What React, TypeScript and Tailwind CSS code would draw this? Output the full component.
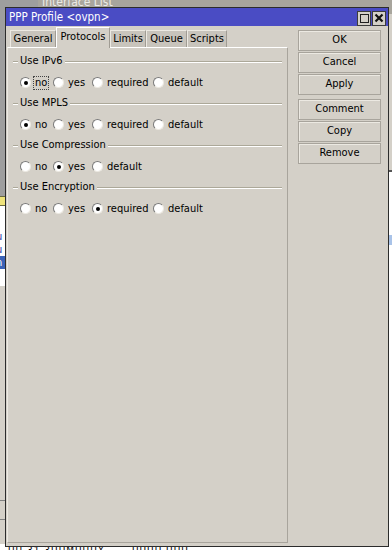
import React from "react";

const FONT = '"DejaVu Sans Condensed", "DejaVu Sans", sans-serif';

function Radio({ checked }: { checked?: boolean }) {
  return (
    <span className="relative inline-block w-[11px] h-[11px] rounded-full bg-white border-[1.5px] border-t-[#7a7a7a] border-l-[#7a7a7a] border-r-[#ece9e2] border-b-[#ece9e2] shrink-0">
      {checked && (
        <span className="absolute left-1/2 top-1/2 w-[4px] h-[4px] -ml-[2px] -mt-[2px] rounded-full bg-black" />
      )}
    </span>
  );
}

type Opt = { label: string; w: number; checked?: boolean; focus?: boolean };

function RadioRow({ opts }: { opts: Opt[] }) {
  return (
    <div className="h-[21px] flex items-center pl-[12px]">
      {opts.map((o, i) => (
        <div key={i} className="flex items-center" style={{ width: o.w }}>
          <Radio checked={o.checked} />
          <span
            className={
              "ml-[2px] px-[1px] leading-[11px] pb-[1px] border border-dotted " +
              (o.focus ? "border-[#444]" : "border-transparent")
            }
          >
            {o.label}
          </span>
        </div>
      ))}
    </div>
  );
}

function GroupLabel({ text }: { text: string }) {
  return (
    <div className="h-[21px] flex items-center">
      <div className="ml-[5px] w-[5px] h-[2px] border-t border-t-[#aca899] border-b border-b-white" />
      <span className="px-[2px]">{text}</span>
      <div className="flex-1 mr-[5px] h-[2px] border-t border-t-[#aca899] border-b border-b-white" />
    </div>
  );
}

function Btn({ label }: { label: string }) {
  return (
    <div className="h-[21px] flex items-center justify-center border border-[#a8a49c] bg-[#d4d0c8] shadow-[inset_1px_1px_0_#ece9e2]">
      {label}
    </div>
  );
}

function Tab({ label, w, active }: { label: string; w: number; active?: boolean }) {
  return (
    <div
      className={
        active
          ? "h-[21px] -mb-[1px] z-10 flex items-center justify-center bg-[#d4d0c8] border-t border-l border-t-white border-l-white border-r border-r-[#a09c94] pb-[1px]"
          : "h-[17px] flex items-center justify-center bg-[#c8c4bc] border-t border-l border-t-[#ece9e2] border-l-[#ece9e2] border-r border-r-[#a09c94]"
      }
      style={{ width: w }}
    >
      {label}
    </div>
  );
}

export default function App() {
  return (
    <div
      className="relative w-[392px] h-[550px] overflow-hidden bg-[#d4d0c8] text-[11px] text-black"
      style={{ fontFamily: FONT }}
    >
      {/* background desktop windows */}
      <div className="absolute left-0 top-0 w-[38px] h-[200px] bg-[#9e9e9e]" />
      <div className="absolute left-[38px] top-0 right-0 h-[20px] bg-[#a8a59d] text-[#ecebe6] text-[12px] pl-[4px] leading-[16px] -mt-[6px]">
        Interface List
      </div>
      <div className="absolute left-0 top-[196px] w-[10px] h-[10px] bg-[#efe37a] border-y border-[#6a6a40]" />
      <div className="absolute left-0 top-[206px] w-[10px] h-[80px] bg-white text-[#2a3aa8] leading-[13px]">
        <div className="pt-[24px] -ml-[4px]">u</div>
        <div className="-ml-[4px]">u</div>
        <div className="-ml-[4px] bg-[#3b63b8] text-white">n</div>
      </div>
      <div className="absolute left-0 top-[500px] w-[10px] h-[20px] border-y border-[#808080]" />
      <div className="absolute right-0 top-[170px] w-[6px] h-[380px] bg-white border-t-2 border-[#555]" />
      <div className="absolute right-0 top-[235px] w-[6px] h-[10px] bg-[#a9c3e8]" />
      <div className="absolute left-0 right-0 top-[544px] h-[6px] bg-white text-[10px] leading-[10px] pt-[2px] pl-[8px] tracking-[1px]">
        UU 31 3UUMUUUX&nbsp;&nbsp;&nbsp;&nbsp;&nbsp;&nbsp;&nbsp;UUUU UUU
      </div>

      {/* dialog */}
      <div className="absolute left-[5px] top-[7px] w-[384px] h-[540px] border border-[#2c2c2c] bg-[#d4d0c8] flex flex-col">
        <div className="h-[18px] bg-[#4a4cc4] text-white text-[11.5px] flex items-center justify-between pl-[3px] pr-[2px]">
          <span className="leading-[14px]">PPP Profile &lt;ovpn&gt;</span>
          <div className="flex gap-[1px] mt-[2px]">
            <div className="w-[14px] h-[15px] bg-[#d4d0c8] border border-[#3c3c3c] flex items-center justify-center">
              <div className="w-[9px] h-[9px] border-[1.5px] border-[#202020]" />
            </div>
            <div className="w-[14px] h-[15px] bg-[#d4d0c8] border border-[#3c3c3c] flex items-center justify-center">
              <svg width="10" height="10" viewBox="0 0 10 10">
                <path d="M1.5 1.5 L8.5 8.5 M8.5 1.5 L1.5 8.5" stroke="#111" strokeWidth="2.2" />
              </svg>
            </div>
          </div>
        </div>

        <div className="flex flex-1 pt-[1px]">
          {/* left: tabs + panel */}
          <div className="ml-[1px] w-[281px] flex flex-col pb-[3px]">
            <div className="h-[20px] flex items-end pl-[3px]">
              <Tab label="General" w={46} />
              <Tab label="Protocols" w={54} active />
              <Tab label="Limits" w={36} />
              <Tab label="Queue" w={41} />
              <Tab label="Scripts" w={40} />
            </div>
            <div className="flex-1 border border-t-white border-l-[#ece9e2] border-r-[#a8a49c] border-b-[#a8a49c] pt-[3px]">
              <GroupLabel text="Use IPv6" />
              <RadioRow
                opts={[
                  { label: "no", w: 33, checked: true, focus: true },
                  { label: "yes", w: 39 },
                  { label: "required", w: 61 },
                  { label: "default", w: 60 },
                ]}
              />
              <GroupLabel text="Use MPLS" />
              <RadioRow
                opts={[
                  { label: "no", w: 33, checked: true },
                  { label: "yes", w: 39 },
                  { label: "required", w: 61 },
                  { label: "default", w: 60 },
                ]}
              />
              <GroupLabel text="Use Compression" />
              <RadioRow
                opts={[
                  { label: "no", w: 33 },
                  { label: "yes", w: 39, checked: true },
                  { label: "default", w: 60 },
                ]}
              />
              <GroupLabel text="Use Encryption" />
              <RadioRow
                opts={[
                  { label: "no", w: 33 },
                  { label: "yes", w: 39 },
                  { label: "required", w: 61, checked: true },
                  { label: "default", w: 60 },
                ]}
              />
            </div>
          </div>

          {/* right: buttons */}
          <div className="ml-[10px] w-[83px] mt-[3px] flex flex-col">
            <div className="flex flex-col gap-[1px]">
              <Btn label="OK" />
              <Btn label="Cancel" />
              <Btn label="Apply" />
            </div>
            <div className="flex flex-col gap-[1px] mt-[4px]">
              <Btn label="Comment" />
              <Btn label="Copy" />
              <Btn label="Remove" />
            </div>
          </div>
        </div>
      </div>
    </div>
  );
}
